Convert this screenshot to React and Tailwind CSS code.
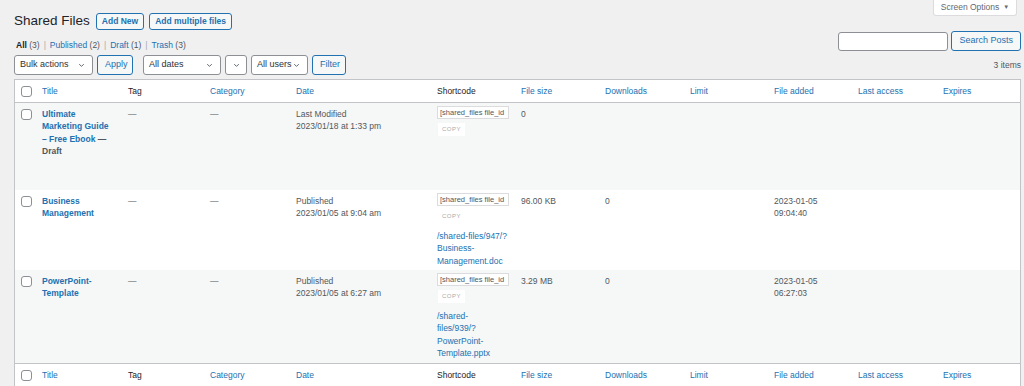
import React from 'react';

const cols = 'grid grid-cols-[18px_85px_82px_86px_141px_84px_84px_85px_84px_84px_85px_1fr]';

const Checkbox = () => (
  <span className="block w-[11px] h-[11px] rounded-[3px] border border-[#8c8f94] bg-white" />
);

const Chevron = () => (
  <svg width="9" height="9" viewBox="0 0 20 20" className="ml-auto">
    <path d="M5 7l5 5 5-5" fill="none" stroke="#50575e" strokeWidth="2" />
  </svg>
);

const Select = ({ label, width }) => (
  <div className={`flex items-center h-[20px] ${width} rounded-[3px] border border-[#8c8f94] bg-white pl-[5px] pr-[6px] text-[9px] text-[#2c3338]`}>
    <span>{label}</span>
    <Chevron />
  </div>
);

const Button = ({ children, className = '' }) => (
  <button className={`h-[20px] px-[7px] rounded-[3px] border border-[#2271b1] bg-[#f6f7f7] text-[9px] text-[#2271b1] ${className}`}>
    {children}
  </button>
);

const HeadRow = ({ top }) => (
  <div className={`${cols} h-[23px] items-center bg-white ${top ? 'border-b' : 'border-t'} border-[#c3c4c7]`}>
    <div className="pl-[6px]"><Checkbox /></div>
    <div className="pl-[9px] text-[#2271b1]">Title</div>
    <div className="pl-[10px] text-[#1d2327]">Tag</div>
    <div className="pl-[10px] text-[#2271b1]">Category</div>
    <div className="pl-[10px] text-[#2271b1]">Date</div>
    <div className="pl-[10px] text-[#1d2327]">Shortcode</div>
    <div className="pl-[10px] text-[#2271b1]">File size</div>
    <div className="pl-[10px] text-[#2271b1]">Downloads</div>
    <div className="pl-[10px] text-[#2271b1]">Limit</div>
    <div className="pl-[10px] text-[#2271b1]">File added</div>
    <div className="pl-[10px] text-[#2271b1]">Last access</div>
    <div className="pl-[10px] text-[#2271b1]">Expires</div>
  </div>
);

const Shortcode = ({ link }) => (
  <div className="pl-[10px] pt-[3px]">
    <div className="w-[72px] h-[13px] overflow-hidden whitespace-nowrap border border-[#dcdcde] bg-white px-[2px] text-[7.5px] leading-[11px] text-[#50575e]">
      [shared_files file_id
    </div>
    <div className="mt-[4px] ml-[1px] w-[27px] h-[13px] flex items-center justify-center bg-white text-[6px] tracking-[0.5px] text-[#a7aaad]">
      COPY
    </div>
    {link && <div className="mt-[7px] text-[#2271b1] leading-[12.3px]">{link}</div>}
  </div>
);

const rows = [
  {
    h: 'h-[87px]',
    bg: 'bg-[#f6f7f7]',
    title: (
      <>
        <span className="font-semibold text-[#2271b1]">Ultimate<br />Marketing Guide<br />– Free Ebook</span>
        <span className="font-semibold text-[#50575e]"> —<br />Draft</span>
      </>
    ),
    date: ['Last Modified', '2023/01/18 at 1:33 pm'],
    link: null,
    size: '0',
    downloads: '',
    added: null,
  },
  {
    h: 'h-[80px]',
    bg: 'bg-white',
    title: <span className="font-semibold text-[#2271b1]">Business<br />Management</span>,
    date: ['Published', '2023/01/05 at 9:04 am'],
    link: <>/shared-files/947/?<br />Business-<br />Management.doc</>,
    size: '96.00 KB',
    downloads: '0',
    added: ['2023-01-05', '09:04:40'],
  },
  {
    h: 'h-[93px]',
    bg: 'bg-[#f6f7f7]',
    title: <span className="font-semibold text-[#2271b1]">PowerPoint-<br />Template</span>,
    date: ['Published', '2023/01/05 at 6:27 am'],
    link: <>/shared-<br />files/939/?<br />PowerPoint-<br />Template.pptx</>,
    size: '3.29 MB',
    downloads: '0',
    added: ['2023-01-05', '06:27:03'],
  },
];

export default function App() {
  return (
    <div className="min-h-[386px] bg-[#f0f0f1] font-['Liberation_Sans',Arial,sans-serif] text-[8.5px] text-[#3c434a] pl-[14px] pr-[3px] overflow-hidden">
      {/* top bar */}
      <div className="flex justify-end">
        <div className="flex items-center h-[16px] w-[84px] mr-[4px] justify-center gap-[4px] bg-white border border-t-0 border-[#dcdcde] rounded-b-[3px] text-[8.5px] text-[#646970]">
          Screen Options <span className="text-[6px]">▼</span>
        </div>
      </div>

      <div className="flex items-start">
        <div className="flex-1">
          <div className="flex items-center gap-[5px] -mt-[5px]">
            <h1 className="text-[13.5px] text-[#1d2327] mr-[1px]">Shared Files</h1>
            <button className="h-[17px] px-[5px] rounded-[3px] border border-[#2271b1] bg-[#f6f7f7] text-[8.5px] font-semibold text-[#2271b1]">Add New</button>
            <button className="h-[17px] px-[5px] rounded-[3px] border border-[#2271b1] bg-[#f6f7f7] text-[8.5px] font-semibold text-[#2271b1]">Add multiple files</button>
          </div>
          <div className="mt-[8px] ml-[2px] flex items-center gap-[4px] text-[8.5px] text-[#50575e]">
            <span><span className="font-semibold text-[#1d2327]">All</span> (3)</span>
            <span className="text-[#a7aaad]">|</span>
            <span><span className="text-[#2271b1]">Published</span> (2)</span>
            <span className="text-[#a7aaad]">|</span>
            <span><span className="text-[#2271b1]">Draft</span> (1)</span>
            <span className="text-[#a7aaad]">|</span>
            <span><span className="text-[#2271b1]">Trash</span> (3)</span>
          </div>
        </div>
        <div className="flex items-center gap-[3px] mt-[15px]">
          <input className="w-[110px] h-[19px] rounded-[3px] border border-[#8c8f94] bg-white" />
          <Button className="px-[5px]">Search Posts</Button>
        </div>
      </div>

      {/* filters */}
      <div className="flex items-center mt-[3px] h-[20px]">
        <Select label="Bulk actions" width="w-[79px]" />
        <Button className="ml-[4px] w-[36px] px-0">Apply</Button>
        <Select label="All dates" width="w-[78px] ml-[10px]" />
        <div className="ml-[4px] flex items-center h-[20px] w-[22px] rounded-[3px] border border-[#8c8f94] bg-white pr-[5px]"><Chevron /></div>
        <Select label="All users" width="w-[57px] ml-[4px]" />
        <Button className="ml-[4px] w-[34px] px-0">Filter</Button>
        <span className="ml-auto text-[#50575e]">3 items</span>
      </div>

      {/* table */}
      <div className="mt-[4px] border border-[#c3c4c7] bg-white leading-[12.3px]">
        <HeadRow top />
        {rows.map((r, i) => (
          <div key={i} className={`${cols} ${r.h} ${r.bg}`}>
            <div className="pl-[6px] pt-[6px]"><Checkbox /></div>
            <div className="pl-[9px] pt-[5px]">{r.title}</div>
            <div className="pl-[10px] pt-[5px] text-[#50575e]">—</div>
            <div className="pl-[10px] pt-[5px] text-[#50575e]">—</div>
            <div className="pl-[10px] pt-[5px] text-[#50575e]">{r.date[0]}<br />{r.date[1]}</div>
            <Shortcode link={r.link} />
            <div className="pl-[10px] pt-[5px] text-[#50575e]">{r.size}</div>
            <div className="pl-[10px] pt-[5px] text-[#50575e]">{r.downloads}</div>
            <div />
            <div className="pl-[10px] pt-[5px] text-[#50575e]">{r.added && <>{r.added[0]}<br />{r.added[1]}</>}</div>
            <div />
            <div />
          </div>
        ))}
        <HeadRow />
      </div>
    </div>
  );
}
